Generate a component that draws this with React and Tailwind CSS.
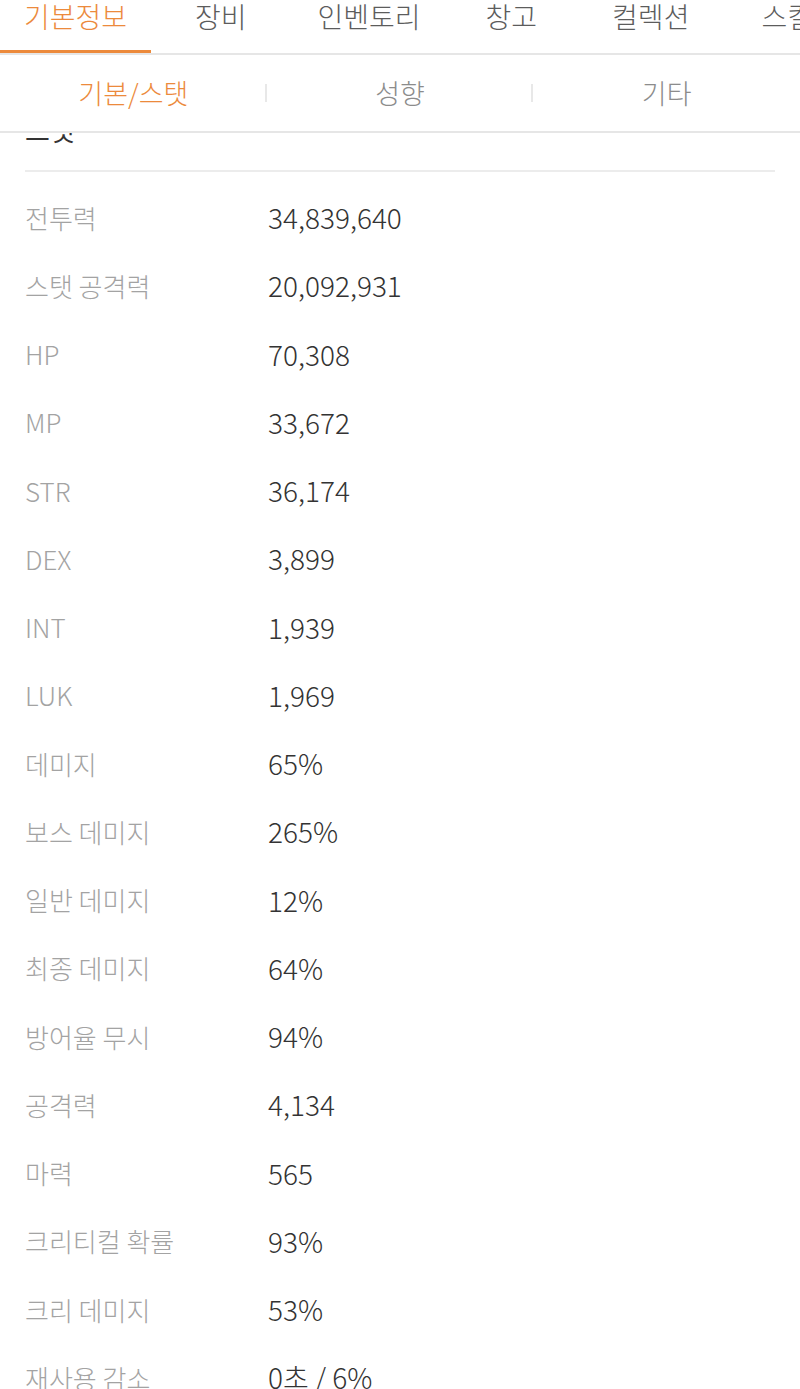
import React from "react";

const FONT = { fontFamily: '"Noto Sans CJK KR", "Noto Sans", sans-serif' };

const stats = [
  ["전투력", "34,839,640"],
  ["스탯 공격력", "20,092,931"],
  ["HP", "70,308"],
  ["MP", "33,672"],
  ["STR", "36,174"],
  ["DEX", "3,899"],
  ["INT", "1,939"],
  ["LUK", "1,969"],
  ["데미지", "65%"],
  ["보스 데미지", "265%"],
  ["일반 데미지", "12%"],
  ["최종 데미지", "64%"],
  ["방어율 무시", "94%"],
  ["공격력", "4,134"],
  ["마력", "565"],
  ["크리티컬 확률", "93%"],
  ["크리 데미지", "53%"],
  ["재사용 감소", "0초 / 6%"],
];

const App = () => {
  return (
    <div className="w-[800px] h-[1389px] overflow-hidden bg-white font-light" style={FONT}>
      {/* --- MAIN TABS --- */}
      <div className="h-[55px] border-b-2 border-[#e6e6e6] flex items-start overflow-hidden whitespace-nowrap">
        <div className="w-[151px] h-[55px] shrink-0 border-b-[5px] border-[#ec8a3c] -mb-[2px] text-center">
          <span className="text-[28px] leading-[32px] text-[#ec8a3c]">기본정보</span>
        </div>
        <div className="flex text-[28px] leading-[32px] text-[#5c5c5c]">
          <span className="ml-[44px]">장비</span>
          <span className="ml-[71px]">인벤토리</span>
          <span className="ml-[65px]">창고</span>
          <span className="ml-[75px]">컬렉션</span>
          <span className="ml-[72px]">스킬</span>
        </div>
      </div>

      {/* --- SUB TABS --- */}
      <div className="h-[78px] grid grid-cols-3 items-center border-b-2 border-[#e6e6e6]">
        <div className="relative text-center text-[27px] text-[#ec8a3c]">
          기본/스탯
          <span className="absolute right-0 top-1/2 -translate-y-1/2 h-[18px] w-[2px] bg-[#e8e8e8]"></span>
        </div>
        <div className="relative text-center text-[27px] text-[#8c8c8c]">
          성향
          <span className="absolute right-0 top-1/2 -translate-y-1/2 h-[18px] w-[2px] bg-[#e8e8e8]"></span>
        </div>
        <div className="text-center text-[27px] text-[#8c8c8c]">기타</div>
      </div>

      {/* --- STAT LIST --- */}
      <div className="px-[25px]">
        <div className="h-[39px] overflow-hidden border-b-2 border-[#ececec]">
          <h3 className="text-[27px] leading-[27px] font-normal text-[#333] -mt-[17px]">스탯</h3>
        </div>
        <div className="pt-[11px]">
          {stats.map(([label, value]) => (
            <div key={label} className="h-[68.25px] flex items-center">
              <span className="w-[243px] shrink-0 text-[26px] text-[#a3a3a3]">{label}</span>
              <span className="text-[28px] text-[#333]">{value}</span>
            </div>
          ))}
        </div>
      </div>
    </div>
  );
};

export default App;
